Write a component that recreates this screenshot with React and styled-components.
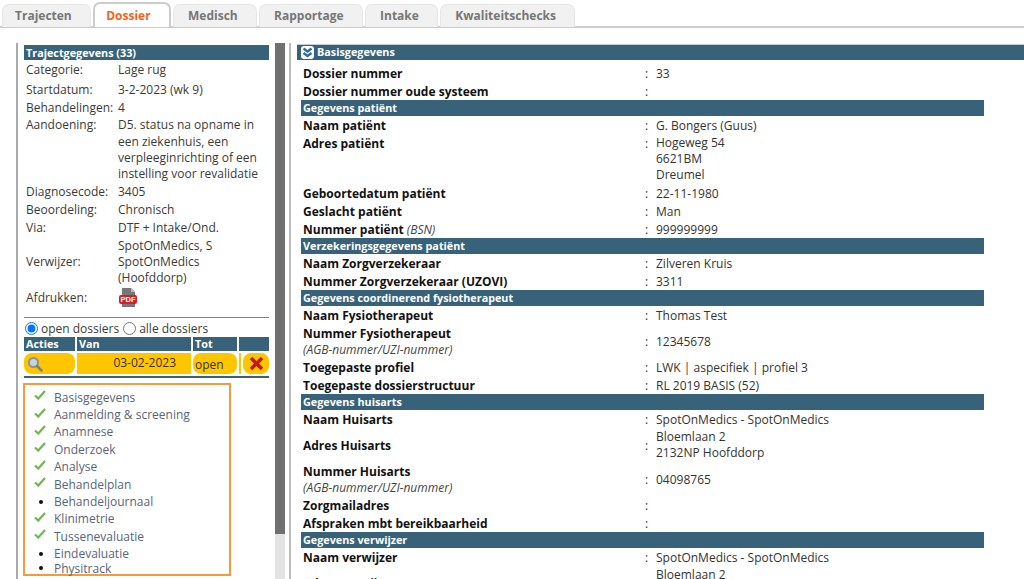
import React from "react";
import styled, { createGlobalStyle } from "styled-components";

const Global = createGlobalStyle`
  html, body { margin: 0; padding: 0; background: #fff; height: 100%; overflow: hidden; }
  body { font-family: "Open Sans", "Liberation Sans", sans-serif; font-size: 12px; color: #333; }
  * { box-sizing: border-box; }
`;

const Page = styled.div`
  width: 1024px;
  height: 579px;
  overflow: hidden;
`;

const TabBar = styled.div`
  display: flex;
  height: 28px;
  padding: 3px 0 0 2px;
  gap: 2px;
  border-bottom: 2px solid #ccc;
`;

const Tab = styled.div`
  height: ${p => (p.active ? "25px" : "23px")};
  margin-top: ${p => (p.active ? "-1px" : "1px")};
  padding: ${p => (p.active ? "1px" : "0")} 18.4px 0 ${p => p.pad || 14}px;
  line-height: 22px;
  font-weight: 700;
  font-size: 12px;
  border-radius: 7px 7px 0 0;
  background: ${p => (p.active ? "#fff" : "#f1f1f1")};
  color: ${p => (p.active ? "#f26522" : "#777")};
  border: ${p => (p.active ? "2px solid #ccc" : "1px solid #e6e6e6")};
  border-bottom: none;
  z-index: 1;
`;

const Main = styled.div`
  display: flex;
  height: 551px;
  padding: 15px 0 0 16px;
`;

const Sidebar = styled.aside`
  width: 259px;
  height: 536px;
  flex: none;
  padding: 2px 6px 0 6px;
  border-left: 2px solid #aaa;
`;

const Bar = styled.div`
  height: 15px;
  line-height: 15px;
  padding-left: 2px;
  background: #38627a;
  color: #fff;
  font-weight: 700;
  font-size: 10.8px;
  display: flex;
  align-items: center;
  gap: 4px;
`;

const InfoRows = styled.div`
  padding: 1px 0 0 2px;
`;

const InfoRow = styled.div`
  display: flex;
  align-items: ${p => (p.middle ? "center" : "flex-start")};
  min-height: ${p => p.h || 18}px;
  line-height: 16.3px;
  font-size: 12px;
  color: #3a3a3a;
  padding-top: 1px;
`;

const InfoLabel = styled.div`
  width: 92px;
  flex: none;
`;

const InfoValue = styled.div`
  flex: 1;
`;

const Rule = styled.div`
  height: 1px;
  margin-top: ${p => p.mt || 0}px;
  background: #5f8aa3;
`;

const RadioRow = styled.div`
  display: flex;
  align-items: center;
  height: 19px;
  padding: 2px 0 0 1px;
  font-size: 12px;
  color: #3a3a3a;
`;

const RadioLabel = styled.label`
  display: flex;
  align-items: center;
  gap: 3px;
  margin-right: 4px;
`;

const Radio = styled.input`
  margin: 0;
  width: 13px;
  height: 13px;
`;

const DossierGrid = styled.div`
  display: grid;
  grid-template-columns: 51px 114px 44px 30px;
  column-gap: 2px;
  row-gap: 2px;
`;

const HeadCell = styled.div`
  height: 14px;
  line-height: 14px;
  padding-left: 2px;
  background: #38627a;
  color: #fff;
  font-weight: 700;
  font-size: 10.8px;
`;

const YellowCell = styled.div`
  height: 21px;
  background: #ffc600;
  border-radius: ${p => (p.round ? "8px" : "0")};
  display: flex;
  align-items: center;
  justify-content: ${p => p.justify || "flex-start"};
  padding: ${p => p.top || 0}px ${p => p.pad || 0}px ${p => p.bottom || 0}px;
  font-size: 12px;
  color: #333;
`;

const ActionCell = styled.div`
  display: flex;
  gap: 2px;
`;

const Stripe = styled.span`
  width: 2px;
  height: 21px;
  flex: none;
  background: #ffc600;
`;

const CrossCell = styled(YellowCell)`
  flex: 1;
`;

const ThickRule = styled.div`
  height: 2px;
  margin-top: 2px;
  background: #38627a;
`;

const StepBox = styled.div`
  width: 208px;
  height: 193px;
  margin: 5px 0 0 -1px;
  padding: 3px 0 0 9px;
  border: 2px solid #f59a3c;
`;

const Step = styled.div`
  display: flex;
  align-items: center;
  height: 17.4px;
  margin-top: ${p => (p.tight ? "-3px" : "0")};
  font-size: 12px;
  color: #5a6478;
`;

const StepMark = styled.div`
  width: 20px;
  flex: none;
  display: flex;
  padding-left: ${p => (p.dot ? "5px" : "0")};
  margin-top: -4px;
`;

const Dot = styled.span`
  width: 4px;
  height: 4px;
  border-radius: 50%;
  margin-top: 4px;
  background: #111;
`;

const Scrollbar = styled.div`
  width: 10px;
  height: 536px;
  flex: none;
  background: #e3e3e3;
`;

const Thumb = styled.div`
  height: 491px;
  background: #707070;
`;

const Content = styled.main`
  flex: 1;
  min-width: 0;
  height: 536px;
  margin-left: 4px;
  padding: 1px 0 0 6px;
  border-left: 2px solid #bbb;
`;

const SectionBar = styled(Bar)`
  height: 16px;
  margin-bottom: 4px;
  padding: 0 0 2px 4px;
  gap: 3px;
  border-top: 1px solid #c4ced4;
`;

const BarIcon = styled.span`
  display: flex;
  align-items: center;
  justify-content: center;
  width: 13px;
  height: 13px;
  margin-top: 2px;
  background: #fff;
  border-radius: 3px;
`;

const Fields = styled.div`
  width: 687px;
`;

const SubBar = styled.div`
  height: 16px;
  line-height: 16px;
  margin-left: 4px;
  padding-left: 2px;
  background: #38627a;
  color: #fff;
  font-weight: 700;
  font-size: 10.8px;
`;

const Row = styled.div`
  display: flex;
  align-items: ${p => (p.top ? "flex-start" : "center")};
  min-height: 18px;
  padding: 2px 0 0 6px;
  line-height: 16px;
`;

const RowLabel = styled.div`
  width: 342px;
  flex: none;
  font-weight: 700;
  color: #111;
`;

const RowNote = styled.div`
  font-weight: 400;
  font-style: italic;
  font-size: 12px;
  color: #444;
`;

const InlineNote = styled.span`
  font-weight: 400;
  font-style: italic;
  font-size: 12px;
  color: #444;
  margin-left: 3px;
`;

const Colon = styled.div`
  width: 11px;
  flex: none;
  color: #333;
`;

const RowValue = styled.div`
  margin: ${p => (p.multi ? "-1px 0 1px" : "0")};
  color: #333;
`;

const Checkmark = () => (
  <svg width="12" height="10" viewBox="0 0 13 11">
    <path d="M1 6 L4.6 9.4 L12 1.2" fill="none" stroke="#6cb84f" strokeWidth="2.4" />
  </svg>
);

const PdfIcon = () => (
  <svg width="20" height="20" viewBox="0 0 20 20">
    <path d="M4 0 H13 L17 4 V19 H4 Z" fill="#777" />
    <path d="M13 0 L17 4 H13 Z" fill="#bbb" />
    <rect x="1" y="7" width="18" height="9" rx="2" fill="#d22027" />
    <text x="10" y="14.4" textAnchor="middle" fontSize="7.5" fontWeight="700" fill="#fff" fontFamily="Liberation Sans">PDF</text>
  </svg>
);

const SearchIcon = () => (
  <svg width="16" height="16" viewBox="0 0 16 16">
    <circle cx="6.5" cy="6.5" r="4.6" fill="#c4d4e0" stroke="#87949c" strokeWidth="2" />
    <path d="M10 10 L14.5 14.5" stroke="#8a8064" strokeWidth="2.6" strokeLinecap="round" />
  </svg>
);

const CrossIcon = () => (
  <svg width="15" height="15" viewBox="0 0 15 15">
    <path d="M2 2 L13 13 M13 2 L2 13" stroke="#c8140c" strokeWidth="3.6" />
  </svg>
);

const ChevronsIcon = () => (
  <svg width="11" height="11" viewBox="0 0 11 11">
    <path d="M1.5 1.5 L5.5 4.5 L9.5 1.5 M1.5 6 L5.5 9 L9.5 6" fill="none" stroke="#2f6e9a" strokeWidth="2.4" />
  </svg>
);

const steps = [
  ["Basisgegevens", true],
  ["Aanmelding & screening", true],
  ["Anamnese", true],
  ["Onderzoek", true],
  ["Analyse", true],
  ["Behandelplan", true],
  ["Behandeljournaal", false],
  ["Klinimetrie", true],
  ["Tussenevaluatie", true],
  ["Eindevaluatie", false],
  ["Physitrack", false, true],
];

const sections = [
  {
    rows: [
      { label: "Dossier nummer", value: ["33"] },
      { label: "Dossier nummer oude systeem" },
    ],
  },
  {
    title: "Gegevens patiënt",
    rows: [
      { label: "Naam patiënt", value: ["G. Bongers (Guus)"] },
      { label: "Adres patiënt", value: ["Hogeweg 54", "6621BM", "Dreumel"], top: true },
      { label: "Geboortedatum patiënt", value: ["22-11-1980"] },
      { label: "Geslacht patiënt", value: ["Man"] },
      { label: "Nummer patiënt", inline: "(BSN)", value: ["999999999"] },
    ],
  },
  {
    title: "Verzekeringsgegevens patiënt",
    rows: [
      { label: "Naam Zorgverzekeraar", value: ["Zilveren Kruis"] },
      { label: "Nummer Zorgverzekeraar (UZOVI)", value: ["3311"] },
    ],
  },
  {
    title: "Gegevens coordinerend fysiotherapeut",
    rows: [
      { label: "Naam Fysiotherapeut", value: ["Thomas Test"] },
      { label: "Nummer Fysiotherapeut", note: "(AGB-nummer/UZI-nummer)", value: ["12345678"] },
      { label: "Toegepaste profiel", value: ["LWK | aspecifiek | profiel 3"] },
      { label: "Toegepaste dossierstructuur", value: ["RL 2019 BASIS (52)"] },
    ],
  },
  {
    title: "Gegevens huisarts",
    rows: [
      { label: "Naam Huisarts", value: ["SpotOnMedics - SpotOnMedics"] },
      { label: "Adres Huisarts", value: ["Bloemlaan 2", "2132NP Hoofddorp"] },
      { label: "Nummer Huisarts", note: "(AGB-nummer/UZI-nummer)", value: ["04098765"] },
      { label: "Zorgmailadres" },
      { label: "Afspraken mbt bereikbaarheid" },
    ],
  },
  {
    title: "Gegevens verwijzer",
    rows: [
      { label: "Naam verwijzer", value: ["SpotOnMedics - SpotOnMedics"] },
      { label: "Adres verwijzer", value: ["Bloemlaan 2", "2132NP Hoofddorp"] },
    ],
  },
];

function DataRow({ row }) {
  const lines = row.value || [];
  return (
    <Row top={row.top}>
      <RowLabel>
        {row.label}
        {row.inline && <InlineNote>{row.inline}</InlineNote>}
        {row.note && <RowNote>{row.note}</RowNote>}
      </RowLabel>
      <Colon>:</Colon>
      <RowValue multi={lines.length > 1}>
        {lines.map((line, i) => (
          <div key={i}>{line}</div>
        ))}
      </RowValue>
    </Row>
  );
}

export default function App() {
  return (
    <Page>
      <Global />
      <TabBar>
        <Tab pad={12}>Trajecten</Tab>
        <Tab active pad={11}>Dossier</Tab>
        <Tab>Medisch</Tab>
        <Tab>Rapportage</Tab>
        <Tab>Intake</Tab>
        <Tab>Kwaliteitschecks</Tab>
      </TabBar>
      <Main>
        <Sidebar>
          <Bar>Trajectgegevens (33)</Bar>
          <InfoRows>
            <InfoRow h={20}><InfoLabel>Categorie:</InfoLabel><InfoValue>Lage rug</InfoValue></InfoRow>
            <InfoRow h={18}><InfoLabel>Startdatum:</InfoLabel><InfoValue>3-2-2023 (wk 9)</InfoValue></InfoRow>
            <InfoRow h={17}><InfoLabel>Behandelingen:</InfoLabel><InfoValue>4</InfoValue></InfoRow>
            <InfoRow h={67}>
              <InfoLabel>Aandoening:</InfoLabel>
              <InfoValue>D5. status na opname in een ziekenhuis, een verpleeginrichting of een instelling voor revalidatie</InfoValue>
            </InfoRow>
            <InfoRow h={18}><InfoLabel>Diagnosecode:</InfoLabel><InfoValue>3405</InfoValue></InfoRow>
            <InfoRow h={18}><InfoLabel>Beoordeling:</InfoLabel><InfoValue>Chronisch</InfoValue></InfoRow>
            <InfoRow h={17}><InfoLabel>Via:</InfoLabel><InfoValue>DTF + Intake/Ond.</InfoValue></InfoRow>
            <InfoRow middle>
              <InfoLabel>Verwijzer:</InfoLabel>
              <InfoValue>SpotOnMedics, S<br />SpotOnMedics<br />(Hoofddorp)</InfoValue>
            </InfoRow>
            <InfoRow middle h={22}><InfoLabel>Afdrukken:</InfoLabel><PdfIcon /></InfoRow>
          </InfoRows>
          <Rule mt={9} />
          <RadioRow>
            <RadioLabel><Radio type="radio" name="filter" defaultChecked />open dossiers</RadioLabel>
            <RadioLabel><Radio type="radio" name="filter" />alle dossiers</RadioLabel>
          </RadioRow>
          <DossierGrid>
            <HeadCell>Acties</HeadCell>
            <HeadCell>Van</HeadCell>
            <HeadCell>Tot</HeadCell>
            <HeadCell />
            <YellowCell round pad={3}><SearchIcon /></YellowCell>
            <YellowCell justify="flex-end" pad={15} bottom={2}>03-02-2023</YellowCell>
            <YellowCell round pad={2} top={2}>open</YellowCell>
            <ActionCell>
              <Stripe />
              <CrossCell round justify="center"><CrossIcon /></CrossCell>
            </ActionCell>
          </DossierGrid>
          <ThickRule />
          <StepBox>
            {steps.map(([name, done, tight]) => (
              <Step key={name} tight={tight}>
                <StepMark dot={!done}>{done ? <Checkmark /> : <Dot />}</StepMark>
                {name}
              </Step>
            ))}
          </StepBox>
        </Sidebar>
        <Scrollbar><Thumb /></Scrollbar>
        <Content>
          <SectionBar>
            <BarIcon><ChevronsIcon /></BarIcon>
            Basisgegevens
          </SectionBar>
          <Fields>
            {sections.map((section, i) => (
              <div key={i}>
                {section.title && <SubBar>{section.title}</SubBar>}
                {section.rows.map(row => (
                  <DataRow key={row.label} row={row} />
                ))}
              </div>
            ))}
          </Fields>
        </Content>
      </Main>
    </Page>
  );
}
